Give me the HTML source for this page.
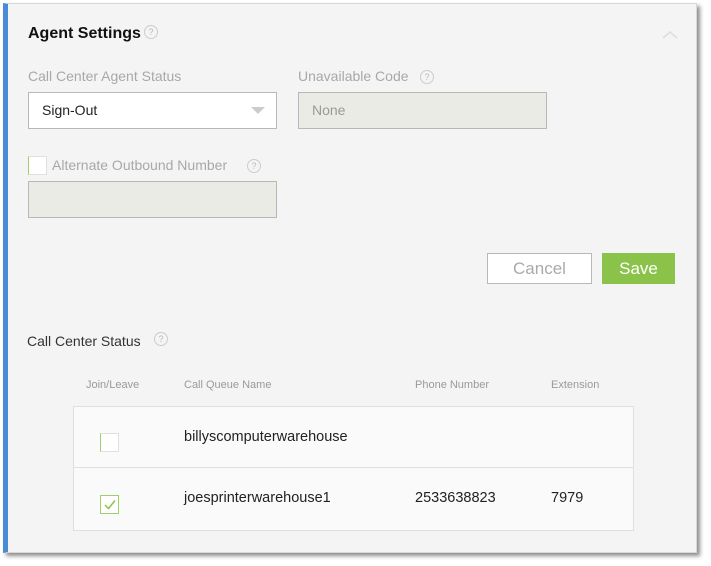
<!DOCTYPE html>
<html><head><style>
body{margin:0;width:711px;height:566px;background:#fff;font-family:"Liberation Sans",sans-serif;position:relative;overflow:hidden}
.p{position:absolute;left:3px;top:3px;width:694px;height:550px;background:#f4f4f4;border:1px solid #d8d8d8;border-left:5px solid #4a8bd6;box-shadow:3px 3px 4px rgba(0,0,0,.45);box-sizing:border-box}
.a{position:absolute}
.q{position:absolute;width:12px;height:12px;border:1px solid #ccc;border-radius:50%;color:#bbb;font-size:9px;text-align:center;line-height:12px}
.lbl{color:#a8a8a8;font-size:14px}
.in{position:absolute;box-sizing:border-box;border:1px solid #b8b8b8;height:37px;font-size:14px;line-height:35px;padding-left:13px}
.th{color:#9a9a9a;font-size:11px}
.td{font-size:14.5px;color:#222}
.cb{position:absolute;width:19px;height:19px;box-sizing:border-box;background:#fff;border:1px solid #e0e0e0;border-left:1px solid #9fd06a}
</style></head><body>
<div class="p"></div>
<div class="a" style="left:28px;top:25px;font-size:16px;font-weight:bold;color:#111">Agent Settings</div>
<div class="q" style="left:144px;top:25px">?</div>
<svg class="a" style="left:662px;top:30px" width="16" height="10"><path d="M1 8 L8 2 L15 8" fill="none" stroke="#ddd" stroke-width="1.5"/></svg>
<div class="a lbl" style="left:28px;top:68px">Call Center Agent Status</div>
<div class="a lbl" style="left:298px;top:68px">Unavailable Code</div>
<div class="q" style="left:420px;top:70px">?</div>
<div class="in" style="left:28px;top:92px;width:249px;background:#fff;color:#222">Sign-Out</div>
<svg class="a" style="left:251px;top:107px" width="14" height="8"><path d="M0 0 L14 0 L7 7Z" fill="#ccc"/></svg>
<div class="in" style="left:298px;top:92px;width:249px;background:#ebebe5;color:#999">None</div>
<div class="cb" style="left:28px;top:156px;border-color:#e0e0e0 #e0e0e0 #e0e0e0 #9fd06a"></div>
<div class="a lbl" style="left:52px;top:157px">Alternate Outbound Number</div>
<div class="q" style="left:247px;top:159px">?</div>
<div class="in" style="left:28px;top:181px;width:249px;background:#ebebe5"></div>
<div class="a" style="left:487px;top:253px;width:105px;height:31px;box-sizing:border-box;border:1px solid #b8b8b8;background:#fff;color:#aaa;font-size:17px;text-align:center;line-height:30px">Cancel</div>
<div class="a" style="left:602px;top:253px;width:73px;height:31px;background:#8bc34a;color:#fff;font-size:17px;text-align:center;line-height:32px">Save</div>
<div class="a" style="left:27px;top:333px;font-size:14px;color:#333">Call Center Status</div>
<div class="q" style="left:154px;top:332px">?</div>
<div class="a th" style="left:86px;top:379px">Join/Leave</div>
<div class="a th" style="left:184px;top:379px">Call Queue Name</div>
<div class="a th" style="left:415px;top:379px">Phone Number</div>
<div class="a th" style="left:551px;top:379px">Extension</div>
<div class="a" style="left:73px;top:406px;width:561px;height:125px;box-sizing:border-box;border:1px solid #e0e0e0;background:#fafafa"></div>
<div class="a" style="left:73px;top:467px;width:561px;height:1px;background:#e0e0e0"></div>
<div class="cb" style="left:100px;top:433px"></div>
<div class="cb" style="left:100px;top:495px;border:1px solid #9fd06a"></div>
<svg class="a" style="left:104px;top:499px" width="12" height="11"><path d="M1 6 L4.5 9.5 L11 1.5" fill="none" stroke="#8bc34a" stroke-width="1.5"/></svg>
<div class="a td" style="left:184px;top:429px">billyscomputerwarehouse</div>
<div class="a td" style="left:184px;top:490px">joesprinterwarehouse1</div>
<div class="a td" style="left:415px;top:490px">2533638823</div>
<div class="a td" style="left:551px;top:490px">7979</div>
</body></html>
